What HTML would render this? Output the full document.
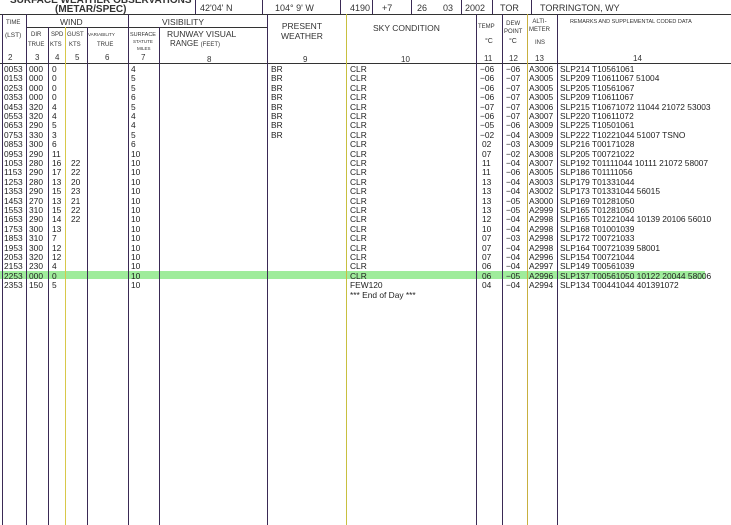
<!DOCTYPE html>
<html><head><meta charset="utf-8"><style>
body{margin:0;width:731px;height:525px;background:#fff;position:relative;overflow:hidden;font-family:"Liberation Sans",sans-serif;color:#222}
.v{position:absolute;width:1px;background:#3a2a55}
.h{position:absolute;height:1px;background:#333}
.hd{position:absolute;white-space:nowrap;color:#333;text-align:center}
.r{position:absolute;left:0;width:731px;height:9px;font-size:8.4px;line-height:9px}
.r span{position:absolute}
</style></head><body>
<div style="position:absolute;left:0;top:271px;width:705px;height:8px;background:#7fe57a;opacity:.75"></div>
<div class="hd" style="left:10px;top:-5px;font-size:10px;font-weight:bold">SURFACE WEATHER OBSERVATIONS</div>
<div class="hd" style="left:55px;top:4px;font-size:10px;font-weight:bold">(METAR/SPEC)</div>
<div class="hd" style="left:200px;top:3px;font-size:9px">42'04' N</div>
<div class="hd" style="left:275px;top:3px;font-size:9px">104° 9' W</div>
<div class="hd" style="left:350px;top:3px;font-size:9px">4190</div>
<div class="hd" style="left:382px;top:3px;font-size:9px">+7</div>
<div class="hd" style="left:417px;top:3px;font-size:9px">26</div>
<div class="hd" style="left:443px;top:3px;font-size:9px">03</div>
<div class="hd" style="left:465px;top:3px;font-size:9px">2002</div>
<div class="hd" style="left:500px;top:3px;font-size:9px">TOR</div>
<div class="hd" style="left:540px;top:3px;font-size:9px">TORRINGTON, WY</div>
<div class="v" style="left:195px;top:0;height:14px"></div>
<div class="v" style="left:262px;top:0;height:14px"></div>
<div class="v" style="left:340px;top:0;height:14px"></div>
<div class="v" style="left:372px;top:0;height:14px"></div>
<div class="v" style="left:411px;top:0;height:14px"></div>
<div class="v" style="left:461px;top:0;height:14px"></div>
<div class="v" style="left:492px;top:0;height:14px"></div>
<div class="v" style="left:531px;top:0;height:14px"></div>
<div class="h" style="left:0;top:14px;width:731px"></div>
<div class="h" style="left:0;top:63px;width:731px"></div>
<div class="h" style="left:26px;top:27px;width:241px"></div>
<div class="v" style="left:2px;top:14px;height:511px"></div>
<div class="v" style="left:26px;top:14px;height:511px"></div>
<div class="v" style="left:48px;top:27px;height:498px"></div>
<div class="v" style="left:65px;top:27px;height:498px;background:#d8c84a"></div>
<div class="v" style="left:87px;top:27px;height:498px"></div>
<div class="v" style="left:128px;top:14px;height:511px"></div>
<div class="v" style="left:159px;top:27px;height:498px"></div>
<div class="v" style="left:267px;top:14px;height:511px"></div>
<div class="v" style="left:346px;top:14px;height:511px;background:#c8c040"></div>
<div class="v" style="left:476px;top:14px;height:511px"></div>
<div class="v" style="left:502px;top:14px;height:511px"></div>
<div class="v" style="left:527px;top:14px;height:511px;background:#c8b040"></div>
<div class="v" style="left:557px;top:14px;height:511px"></div>
<div class="hd" style="left:6px;top:20px;font-size:6px">TIME</div>
<div class="hd" style="left:5px;top:32px;font-size:6.5px">(LST)</div>
<div class="hd" style="left:8px;top:53px;font-size:8px">2</div>
<div class="hd" style="left:60px;top:17px;font-size:8.5px">WIND</div>
<div class="hd" style="left:31px;top:32px;font-size:6px">DIR</div>
<div class="hd" style="left:28px;top:42px;font-size:6px">TRUE</div>
<div class="hd" style="left:35px;top:53px;font-size:8px">3</div>
<div class="hd" style="left:51px;top:32px;font-size:6px">SPD</div>
<div class="hd" style="left:50px;top:42px;font-size:6px">KTS</div>
<div class="hd" style="left:55px;top:53px;font-size:8px">4</div>
<div class="hd" style="left:67px;top:32px;font-size:6px">GUST</div>
<div class="hd" style="left:69px;top:42px;font-size:6px">KTS</div>
<div class="hd" style="left:75px;top:53px;font-size:8px">5</div>
<div class="hd" style="left:88px;top:32px;font-size:4.5px">VARIABILITY</div>
<div class="hd" style="left:97px;top:42px;font-size:6px">TRUE</div>
<div class="hd" style="left:105px;top:53px;font-size:8px">6</div>
<div class="hd" style="left:162px;top:17px;font-size:8.5px">VISIBILITY</div>
<div class="hd" style="left:130px;top:32px;font-size:5.5px">SURFACE</div>
<div class="hd" style="left:133px;top:39px;font-size:4.5px">STATUTE</div>
<div class="hd" style="left:137px;top:46px;font-size:4.5px">MILES</div>
<div class="hd" style="left:141px;top:53px;font-size:8px">7</div>
<div class="hd" style="left:167px;top:29px;font-size:8.5px">RUNWAY VISUAL</div>
<div class="hd" style="left:170px;top:39px;font-size:8px">RANGE <span style="font-size:6px">(FEET)</span></div>
<div class="hd" style="left:207px;top:55px;font-size:8px">8</div>
<div class="hd" style="left:281px;top:21px;font-size:8.5px;line-height:10px">PRESENT<br>WEATHER</div>
<div class="hd" style="left:303px;top:55px;font-size:8px">9</div>
<div class="hd" style="left:373px;top:23px;font-size:8.5px">SKY CONDITION</div>
<div class="hd" style="left:401px;top:55px;font-size:8px">10</div>
<div class="hd" style="left:478px;top:24px;font-size:6px">TEMP</div>
<div class="hd" style="left:485px;top:38px;font-size:7px">°C</div>
<div class="hd" style="left:484px;top:54px;font-size:8px">11</div>
<div class="hd" style="left:504px;top:20px;font-size:6px;line-height:8px">DEW<br>POINT</div>
<div class="hd" style="left:509px;top:38px;font-size:7px">°C</div>
<div class="hd" style="left:509px;top:54px;font-size:8px">12</div>
<div class="hd" style="left:529px;top:18px;font-size:6px;line-height:8px">ALTI-<br>METER</div>
<div class="hd" style="left:535px;top:40px;font-size:6px">INS</div>
<div class="hd" style="left:535px;top:54px;font-size:8px">13</div>
<div class="hd" style="left:570px;top:19px;font-size:5.5px">REMARKS AND SUPPLEMENTAL CODED DATA</div>
<div class="hd" style="left:633px;top:54px;font-size:8px">14</div>
<div class="r" style="top:65px"><span style="left:4px">0053</span><span style="left:29px">000</span><span style="left:52px">0</span><span style="left:131px">4</span><span style="left:271px">BR</span><span style="left:350px">CLR</span><span style="left:480px">−06</span><span style="left:506px">−06</span><span style="left:529px">A3006</span><span style="left:560px">SLP214 T10561061</span></div>
<div class="r" style="top:74.4px"><span style="left:4px">0153</span><span style="left:29px">000</span><span style="left:52px">0</span><span style="left:131px">5</span><span style="left:271px">BR</span><span style="left:350px">CLR</span><span style="left:480px">−06</span><span style="left:506px">−07</span><span style="left:529px">A3005</span><span style="left:560px">SLP209 T10611067 51004</span></div>
<div class="r" style="top:83.8px"><span style="left:4px">0253</span><span style="left:29px">000</span><span style="left:52px">0</span><span style="left:131px">5</span><span style="left:271px">BR</span><span style="left:350px">CLR</span><span style="left:480px">−06</span><span style="left:506px">−07</span><span style="left:529px">A3005</span><span style="left:560px">SLP205 T10561067</span></div>
<div class="r" style="top:93.2px"><span style="left:4px">0353</span><span style="left:29px">000</span><span style="left:52px">0</span><span style="left:131px">6</span><span style="left:271px">BR</span><span style="left:350px">CLR</span><span style="left:480px">−06</span><span style="left:506px">−07</span><span style="left:529px">A3005</span><span style="left:560px">SLP209 T10611067</span></div>
<div class="r" style="top:102.6px"><span style="left:4px">0453</span><span style="left:29px">320</span><span style="left:52px">4</span><span style="left:131px">5</span><span style="left:271px">BR</span><span style="left:350px">CLR</span><span style="left:480px">−07</span><span style="left:506px">−07</span><span style="left:529px">A3006</span><span style="left:560px">SLP215 T10671072 11044 21072 53003</span></div>
<div class="r" style="top:112px"><span style="left:4px">0553</span><span style="left:29px">320</span><span style="left:52px">4</span><span style="left:131px">4</span><span style="left:271px">BR</span><span style="left:350px">CLR</span><span style="left:480px">−06</span><span style="left:506px">−07</span><span style="left:529px">A3007</span><span style="left:560px">SLP220 T10611072</span></div>
<div class="r" style="top:121.4px"><span style="left:4px">0653</span><span style="left:29px">290</span><span style="left:52px">5</span><span style="left:131px">4</span><span style="left:271px">BR</span><span style="left:350px">CLR</span><span style="left:480px">−05</span><span style="left:506px">−06</span><span style="left:529px">A3009</span><span style="left:560px">SLP225 T10501061</span></div>
<div class="r" style="top:130.8px"><span style="left:4px">0753</span><span style="left:29px">330</span><span style="left:52px">3</span><span style="left:131px">5</span><span style="left:271px">BR</span><span style="left:350px">CLR</span><span style="left:480px">−02</span><span style="left:506px">−04</span><span style="left:529px">A3009</span><span style="left:560px">SLP222 T10221044 51007 TSNO</span></div>
<div class="r" style="top:140.2px"><span style="left:4px">0853</span><span style="left:29px">300</span><span style="left:52px">6</span><span style="left:131px">6</span><span style="left:350px">CLR</span><span style="left:482px">02</span><span style="left:506px">−03</span><span style="left:529px">A3009</span><span style="left:560px">SLP216 T00171028</span></div>
<div class="r" style="top:149.6px"><span style="left:4px">0953</span><span style="left:29px">290</span><span style="left:52px">11</span><span style="left:131px">10</span><span style="left:350px">CLR</span><span style="left:482px">07</span><span style="left:506px">−02</span><span style="left:529px">A3008</span><span style="left:560px">SLP205 T00721022</span></div>
<div class="r" style="top:159px"><span style="left:4px">1053</span><span style="left:29px">280</span><span style="left:52px">16</span><span style="left:71px">22</span><span style="left:131px">10</span><span style="left:350px">CLR</span><span style="left:482px">11</span><span style="left:506px">−04</span><span style="left:529px">A3007</span><span style="left:560px">SLP192 T01111044 10111 21072 58007</span></div>
<div class="r" style="top:168.4px"><span style="left:4px">1153</span><span style="left:29px">290</span><span style="left:52px">17</span><span style="left:71px">22</span><span style="left:131px">10</span><span style="left:350px">CLR</span><span style="left:482px">11</span><span style="left:506px">−06</span><span style="left:529px">A3005</span><span style="left:560px">SLP186 T01111056</span></div>
<div class="r" style="top:177.8px"><span style="left:4px">1253</span><span style="left:29px">280</span><span style="left:52px">13</span><span style="left:71px">20</span><span style="left:131px">10</span><span style="left:350px">CLR</span><span style="left:482px">13</span><span style="left:506px">−04</span><span style="left:529px">A3003</span><span style="left:560px">SLP179 T01331044</span></div>
<div class="r" style="top:187.2px"><span style="left:4px">1353</span><span style="left:29px">290</span><span style="left:52px">15</span><span style="left:71px">23</span><span style="left:131px">10</span><span style="left:350px">CLR</span><span style="left:482px">13</span><span style="left:506px">−04</span><span style="left:529px">A3002</span><span style="left:560px">SLP173 T01331044 56015</span></div>
<div class="r" style="top:196.6px"><span style="left:4px">1453</span><span style="left:29px">270</span><span style="left:52px">13</span><span style="left:71px">21</span><span style="left:131px">10</span><span style="left:350px">CLR</span><span style="left:482px">13</span><span style="left:506px">−05</span><span style="left:529px">A3000</span><span style="left:560px">SLP169 T01281050</span></div>
<div class="r" style="top:206px"><span style="left:4px">1553</span><span style="left:29px">310</span><span style="left:52px">15</span><span style="left:71px">22</span><span style="left:131px">10</span><span style="left:350px">CLR</span><span style="left:482px">13</span><span style="left:506px">−05</span><span style="left:529px">A2999</span><span style="left:560px">SLP165 T01281050</span></div>
<div class="r" style="top:215.4px"><span style="left:4px">1653</span><span style="left:29px">290</span><span style="left:52px">14</span><span style="left:71px">22</span><span style="left:131px">10</span><span style="left:350px">CLR</span><span style="left:482px">12</span><span style="left:506px">−04</span><span style="left:529px">A2998</span><span style="left:560px">SLP165 T01221044 10139 20106 56010</span></div>
<div class="r" style="top:224.8px"><span style="left:4px">1753</span><span style="left:29px">300</span><span style="left:52px">13</span><span style="left:131px">10</span><span style="left:350px">CLR</span><span style="left:482px">10</span><span style="left:506px">−04</span><span style="left:529px">A2998</span><span style="left:560px">SLP168 T01001039</span></div>
<div class="r" style="top:234.2px"><span style="left:4px">1853</span><span style="left:29px">310</span><span style="left:52px">7</span><span style="left:131px">10</span><span style="left:350px">CLR</span><span style="left:482px">07</span><span style="left:506px">−03</span><span style="left:529px">A2998</span><span style="left:560px">SLP172 T00721033</span></div>
<div class="r" style="top:243.6px"><span style="left:4px">1953</span><span style="left:29px">300</span><span style="left:52px">12</span><span style="left:131px">10</span><span style="left:350px">CLR</span><span style="left:482px">07</span><span style="left:506px">−04</span><span style="left:529px">A2998</span><span style="left:560px">SLP164 T00721039 58001</span></div>
<div class="r" style="top:253px"><span style="left:4px">2053</span><span style="left:29px">320</span><span style="left:52px">12</span><span style="left:131px">10</span><span style="left:350px">CLR</span><span style="left:482px">07</span><span style="left:506px">−04</span><span style="left:529px">A2996</span><span style="left:560px">SLP154 T00721044</span></div>
<div class="r" style="top:262.4px"><span style="left:4px">2153</span><span style="left:29px">230</span><span style="left:52px">4</span><span style="left:131px">10</span><span style="left:350px">CLR</span><span style="left:482px">06</span><span style="left:506px">−04</span><span style="left:529px">A2997</span><span style="left:560px">SLP149 T00561039</span></div>
<div class="r" style="top:271.8px"><span style="left:4px">2253</span><span style="left:29px">000</span><span style="left:52px">0</span><span style="left:131px">10</span><span style="left:350px">CLR</span><span style="left:482px">06</span><span style="left:506px">−05</span><span style="left:529px">A2996</span><span style="left:560px">SLP137 T00561050 10122 20044 58006</span></div>
<div class="r" style="top:281.2px"><span style="left:4px">2353</span><span style="left:29px">150</span><span style="left:52px">5</span><span style="left:131px">10</span><span style="left:350px">FEW120</span><span style="left:482px">04</span><span style="left:506px">−04</span><span style="left:529px">A2994</span><span style="left:560px">SLP134 T00441044 401391072</span></div>
<div class="r" style="top:290.6px"><span style="left:350px">*** End of Day ***</span></div>
</body></html>
